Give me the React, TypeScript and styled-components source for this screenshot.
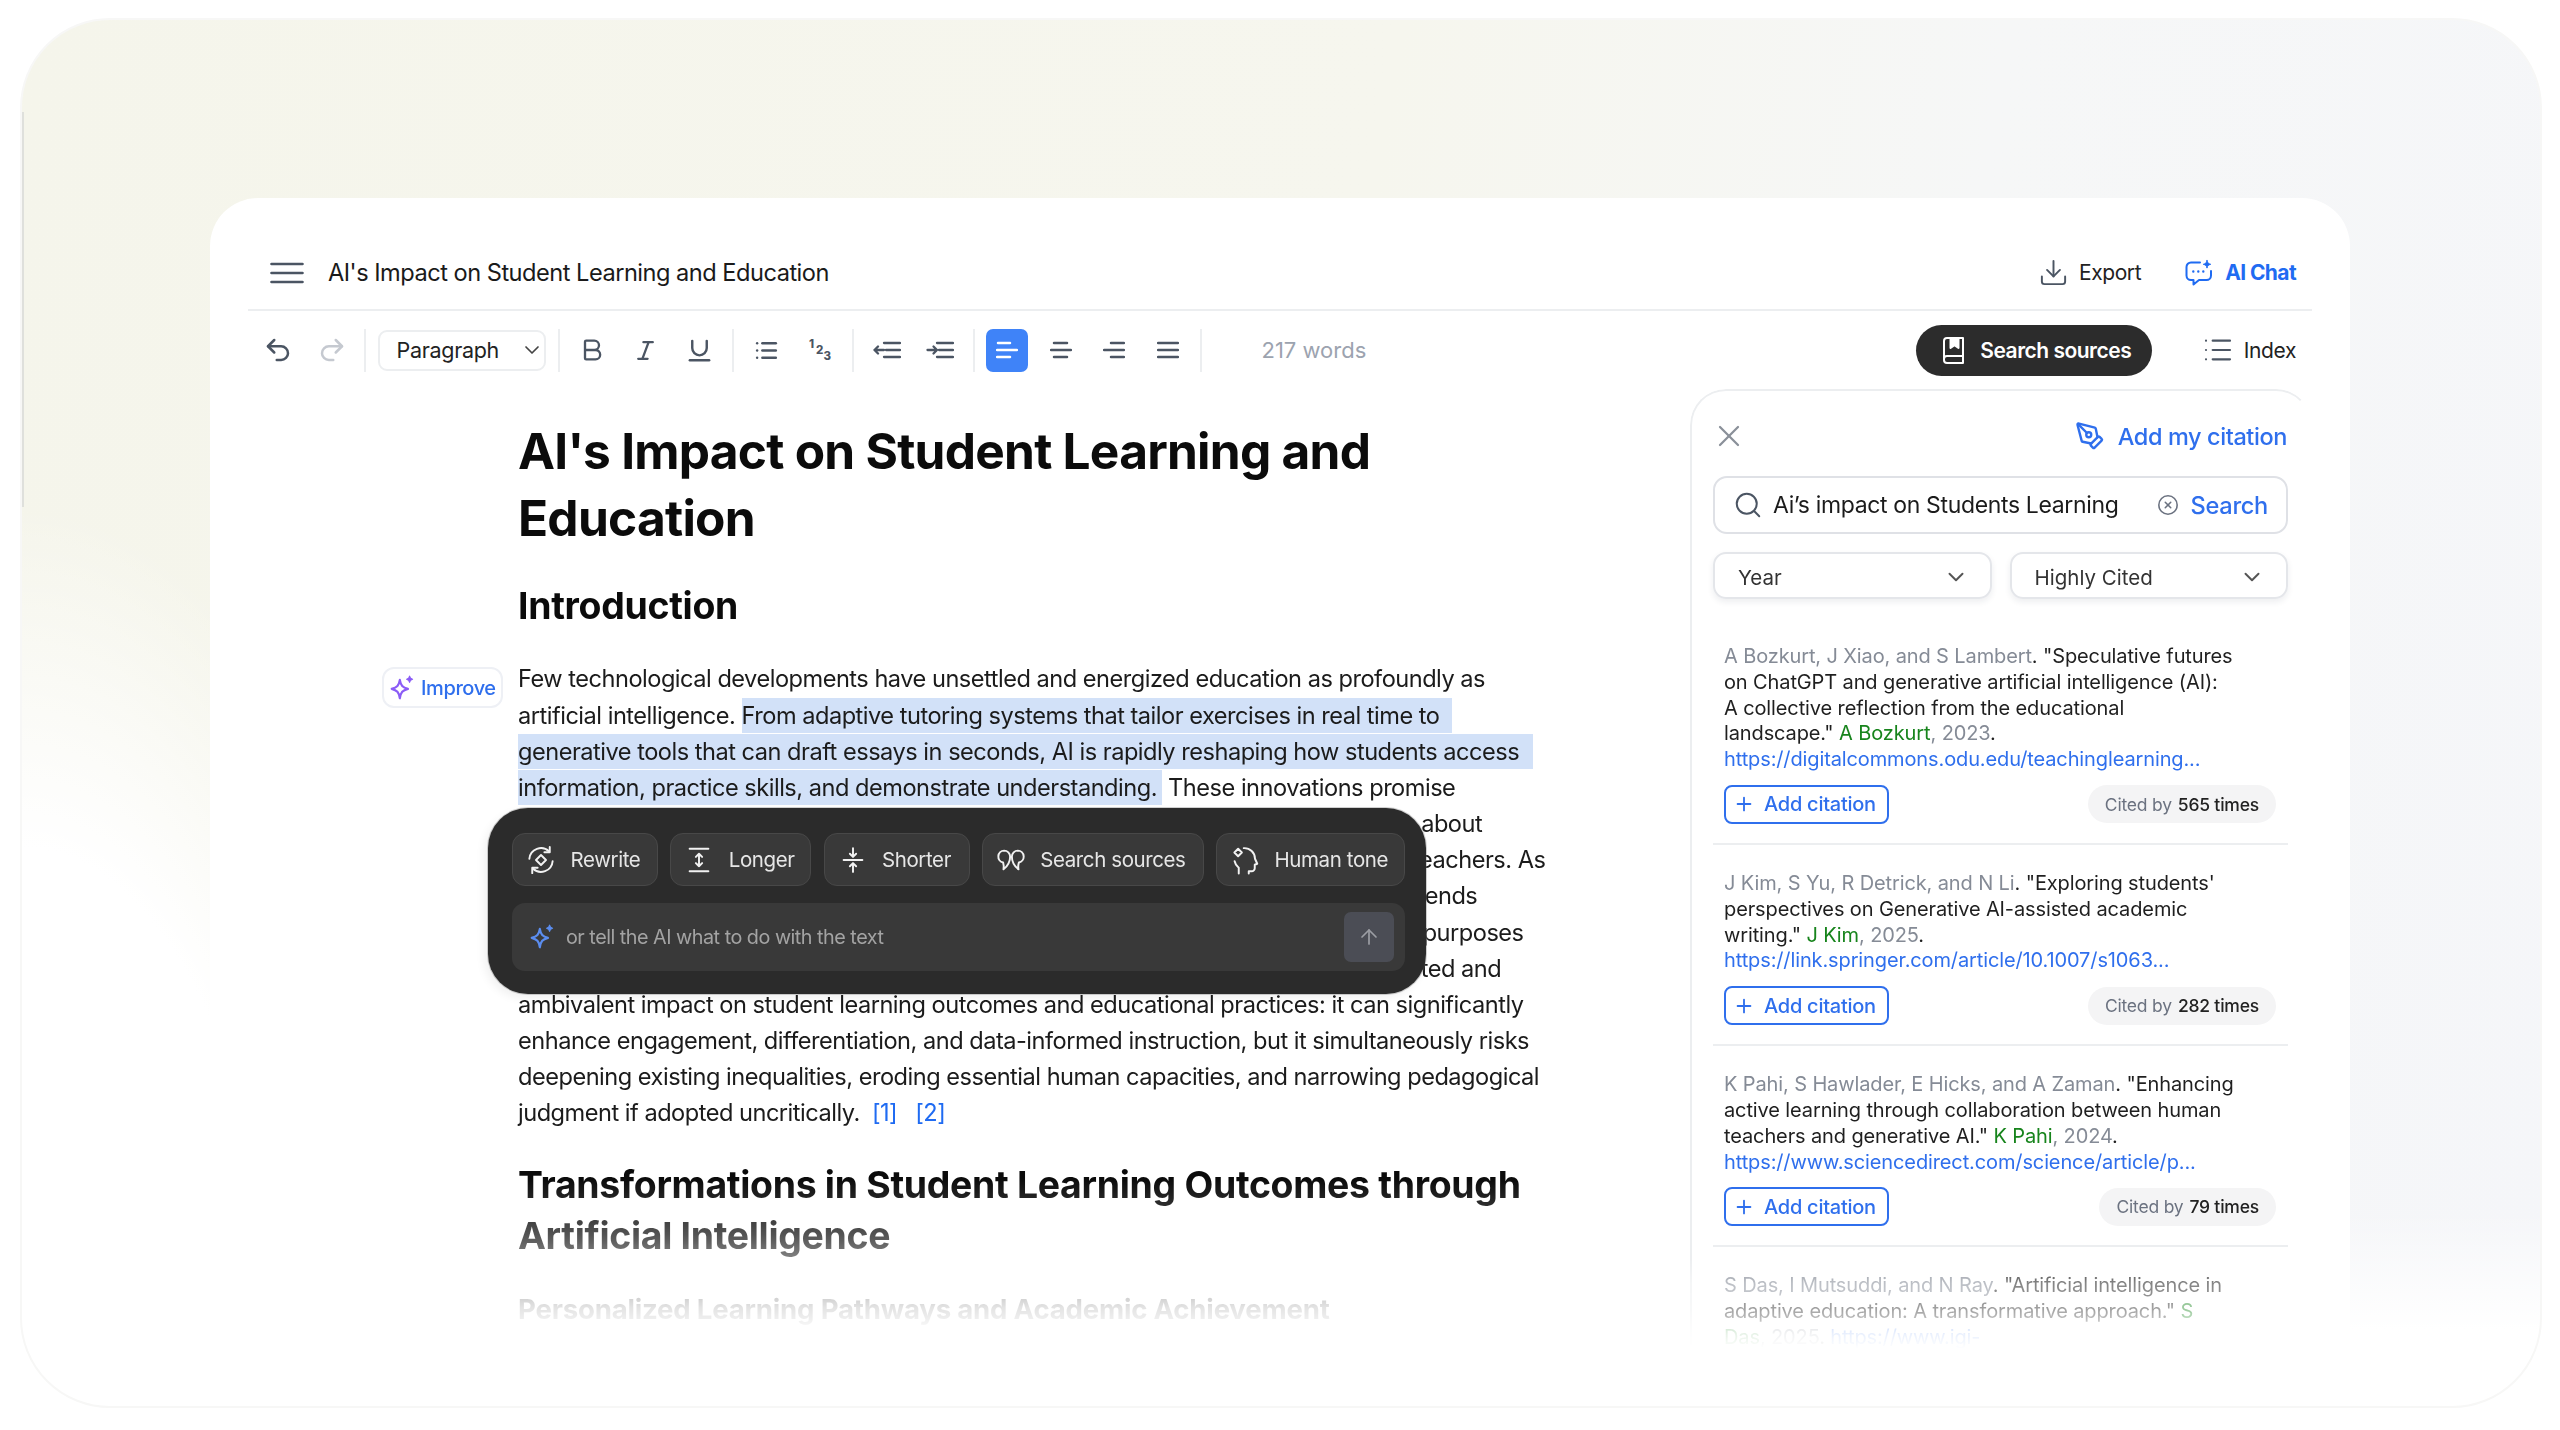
import React from "react";
import styled, { createGlobalStyle } from "styled-components";
import {
  Undo2, Redo2, Bold, Italic, Underline, List, Download, PenTool, X, Search,
  CircleX, ChevronDown, Plus, ArrowUp,
} from "lucide-react";

const Global = createGlobalStyle`
  html, body { margin: 0; padding: 0; background: #fff; }
  body { font-family: Inter, "Noto Sans", sans-serif; color: #111; -webkit-font-smoothing: antialiased; }
  * { box-sizing: border-box; }
`;

const Page = styled.div`
  width: 2560px;
  height: 1430px;
  padding: 18px 20px 22px;
  overflow: hidden;
`;

const Frame = styled.div`
  position: relative;
  width: 2522px;
  height: 1390px;
  padding: 178px 0 0 188px;
  border-radius: 90px;
  border: 2px solid #f7f7f6;
  overflow: hidden;
  background:
    radial-gradient(ellipse 420px 900px at 0 100%, #fff 62%, transparent 100%),
    linear-gradient(to bottom, transparent 86%, #fff 94.5%),
    linear-gradient(100deg, #f5f5eb 0%, #f6f6ee 50%, #f6f7f7 72%, #f5f6f9 100%);
  &::before {
    content: "";
    position: absolute;
    left: 0;
    top: 92px;
    width: 2px;
    height: 395px;
    background: #dfe0dc;
  }
`;

const Card = styled.div`
  width: 2140px;
  height: 1212px;
  padding: 0 38px;
  background: #fff;
  border-radius: 48px 48px 0 0;
`;

const Header = styled.header`
  display: flex;
  align-items: center;
  height: 113px;
  padding: 38px 16px 0 22px;
  border-bottom: 2px solid #eceef0;
`;

const Title = styled.h3`
  margin: 0 0 0 24px;
  font-size: 23.6px;
  font-weight: 400;
  letter-spacing: -0.5px;
  color: #1a1a1a;
`;

const HeaderActions = styled.div`
  display: flex;
  align-items: center;
  margin-left: auto;
`;

const HeaderLink = styled.a<{ $accent?: boolean }>`
  display: flex;
  align-items: center;
  gap: ${(p) => (p.$accent ? "12px" : "10px")};
  margin-left: ${(p) => (p.$accent ? "44px" : "0")};
  font-size: 21px;
  letter-spacing: ${(p) => (p.$accent ? "-0.6px" : "-0.4px")};
  font-weight: ${(p) => (p.$accent ? 700 : 400)};
  color: ${(p) => (p.$accent ? "#1f6bf2" : "#222")};
`;

const Toolbar = styled.div`
  display: flex;
  align-items: center;
  gap: 11.5px;
  height: 78px;
  padding: 0 16px 0 9px;
`;

const ToolButton = styled.div<{ $active?: boolean; $muted?: boolean }>`
  display: flex;
  flex: none;
  align-items: center;
  justify-content: center;
  width: 42px;
  height: 43px;
  border-radius: 7px;
  color: ${(p) => (p.$active ? "#fff" : p.$muted ? "#c5c9d0" : "#4b5563")};
  background: ${(p) => (p.$active ? "#3f83f8" : "transparent")};
`;

const Sep = styled.div`
  flex: none;
  width: 2px;
  height: 43px;
  background: #eceef0;
`;

const BlockSelect = styled.div`
  display: flex;
  flex: none;
  align-items: center;
  justify-content: space-between;
  width: 168.5px;
  height: 41px;
  padding: 0 0 0 17px;
  border: 2px solid #eceef0;
  border-radius: 9px;
  font-size: 21.5px;
  letter-spacing: -0.3px;
  color: #222;
`;

const Words = styled.span`
  margin-left: 48px;
  font-size: 22px;
  color: #9ca3af;
`;

const PillButton = styled.div`
  display: flex;
  align-items: center;
  gap: 15px;
  width: 236px;
  height: 51px;
  margin-left: auto;
  padding-left: 26px;
  border-radius: 26px;
  background: #2c2c2c;
  color: #fff;
  font-size: 21px;
  letter-spacing: -0.5px;
  font-weight: 600;
`;

const IndexLink = styled.div`
  display: flex;
  align-items: center;
  gap: 10px;
  margin-left: 38px;
  font-size: 21px;
  letter-spacing: -0.4px;
  color: #222;
`;

const Main = styled.main`
  display: flex;
  height: 1015px;
`;

const Doc = styled.article`
  flex: 1;
  padding: 28.5px 0 0 270px;
  -webkit-mask-image: linear-gradient(to bottom, #000 790px, rgba(0,0,0,.7) 846px, rgba(0,0,0,.12) 918px, transparent 945px);
  mask-image: linear-gradient(to bottom, #000 790px, rgba(0,0,0,.7) 846px, rgba(0,0,0,.12) 918px, transparent 945px);
`;

const H1 = styled.h1`
  margin: 0;
  font-size: 49.6px;
  line-height: 67px;
  font-weight: 700;
  letter-spacing: -0.75px;
  color: #0b0b0b;
`;

const H2 = styled.h2`
  margin: 0;
  font-size: 37.4px;
  line-height: 50.4px;
  font-weight: 700;
  letter-spacing: -0.3px;
  color: #0b0b0b;
`;

const IntroHeading = styled(H2)`
  margin-top: 29.5px;
`;

const SectionHeading = styled(H2)`
  margin-top: 29px;
`;

const H3 = styled.h3`
  margin: 28px 0 0;
  font-size: 27.6px;
  line-height: 40px;
  font-weight: 700;
  letter-spacing: -0.2px;
  color: #111;
`;

const Paragraph = styled.div`
  position: relative;
  margin-top: 30px;
  font-size: 23.6px;
  letter-spacing: -0.5px;
  line-height: 36.17px;
  color: #1b1b1b;
`;

const Line = styled.div`
  height: 36.17px;
  white-space: nowrap;
`;

const Mark = styled.span<{ $tail?: number }>`
  display: inline-block;
  height: 35.5px;
  padding-right: ${(p) => p.$tail ?? 0}px;
  background: #d2e1f8;
  vertical-align: top;
`;

const Ref = styled.a`
  margin-left: 6px;
  color: #1f6bf2;
  & + & { margin-left: 18px; }
`;

const Improve = styled.div`
  position: absolute;
  left: -136px;
  top: 6px;
  display: flex;
  align-items: center;
  gap: 6px;
  width: 121px;
  height: 41px;
  padding-left: 5px;
  border: 2px solid #eef0f5;
  border-radius: 12px;
  background: #fff;
  font-size: 20px;
  letter-spacing: -0.4px;
  font-weight: 500;
  color: #2f6fed;
`;

const Popup = styled.div`
  position: absolute;
  left: -30px;
  top: 147px;
  display: flex;
  flex-direction: column;
  gap: 17px;
  width: 938px;
  height: 186px;
  padding: 25px 21px 23px 24px;
  border-radius: 40px;
  background: #2b2b2b;
  box-shadow: 0 0 0 1px rgba(120,120,120,.35), -4px 4px 10px rgba(0,0,0,.06);
`;

const ActionRow = styled.div`
  display: flex;
  justify-content: space-between;
`;

const ActionButton = styled.div<{ $w: number }>`
  display: flex;
  align-items: center;
  gap: 14.5px;
  width: ${(p) => p.$w}px;
  height: 53px;
  padding-left: 13px;
  border: 1.5px solid #484848;
  border-radius: 13px;
  background: #393939;
  color: #e6e6e6;
  font-size: 20.5px;
  letter-spacing: -0.4px;
  line-height: 1;
`;

const Prompt = styled.div`
  display: flex;
  align-items: center;
  gap: 11px;
  height: 68px;
  padding: 0 11px 0 17px;
  border-radius: 13px;
  background: #393939;
  color: #a3a3a3;
  font-size: 19.8px;
`;

const SendButton = styled.div`
  display: flex;
  align-items: center;
  justify-content: center;
  width: 50px;
  height: 50px;
  margin-left: auto;
  border-radius: 7px;
  background: #4b4d55;
  color: #9c9ea4;
`;

const Panel = styled.aside`
  flex: none;
  width: 622px;
  padding: 22px 22px 0 21px;
  border: 2px solid #eceef0;
  border-right-color: transparent;
  border-bottom: none;
  border-radius: 36px 36px 0 0;
  -webkit-mask-image: linear-gradient(to bottom, #000 870px, rgba(0,0,0,.55) 894px, rgba(0,0,0,.42) 920px, rgba(0,0,0,.1) 945px, transparent 960px);
  mask-image: linear-gradient(to bottom, #000 870px, rgba(0,0,0,.55) 894px, rgba(0,0,0,.42) 920px, rgba(0,0,0,.1) 945px, transparent 960px);
`;

const PanelTop = styled.div`
  display: flex;
  align-items: center;
  justify-content: space-between;
  height: 46px;
  padding-right: 1px;
`;

const CloseIcon = styled.span`
  display: flex;
  margin-left: -2px;
  color: #8a9099;
`;

const AddMine = styled.div`
  display: flex;
  align-items: center;
  gap: 13px;
  font-size: 23.5px;
  letter-spacing: -0.4px;
  font-weight: 500;
  color: #2f6fed;
`;

const SearchBox = styled.div`
  display: flex;
  align-items: center;
  height: 58px;
  margin-top: 17px;
  padding: 0 18px 0 18px;
  border: 2px solid #dfe1e6;
  border-radius: 14px;
  color: #4b5563;
`;

const SearchText = styled.span`
  margin-left: 10px;
  font-size: 23px;
  letter-spacing: -0.35px;
  color: #1b1b1b;
`;

const ClearIcon = styled.span`
  display: flex;
  margin-left: auto;
  color: #6b7280;
`;

const SearchLink = styled.span`
  margin-left: 12px;
  font-size: 23.6px;
  letter-spacing: -0.3px;
  font-weight: 500;
  color: #2f6fed;
`;

const Filters = styled.div`
  display: flex;
  gap: 18px;
  margin-top: 18px;
`;

const Filter = styled.div`
  display: flex;
  flex: 1;
  align-items: center;
  justify-content: space-between;
  height: 47px;
  padding: 3px 21px 0 23px;
  border: 2px solid #e4e6ea;
  border-radius: 13px;
  box-shadow: 0 3px 6px rgba(30, 40, 60, .08);
  font-size: 20.5px;
  color: #333;
`;

const Entries = styled.div`
  margin-top: 19px;
`;

const Entry = styled.div`
  padding: 26px 0 19px;
  border-bottom: 2px solid #eceef0;
  &:last-child { border-bottom: none; }
`;

const Citation = styled.p`
  margin: 0;
  padding-left: 11px;
  font-size: 20px;
  letter-spacing: -0.12px;
  line-height: 25.8px;
  color: #1f1f1f;
  white-space: nowrap;
`;

const Muted = styled.span`
  color: #858b96;
`;

const Author = styled.span`
  color: #17841c;
`;

const Url = styled.a`
  color: #2f6fed;
`;

const EntryFoot = styled.div`
  display: flex;
  align-items: center;
  justify-content: space-between;
  margin-top: 12px;
  padding: 0 12px 0 11px;
`;

const AddButton = styled.div`
  display: flex;
  align-items: center;
  gap: 9px;
  width: 165px;
  height: 39px;
  padding-left: 7px;
  border: 2px solid #2f6fed;
  border-radius: 8px;
  font-size: 20px;
  letter-spacing: -0.25px;
  font-weight: 500;
  color: #2f6fed;
`;

const CitedBy = styled.div`
  display: flex;
  align-items: center;
  gap: 6px;
  height: 38px;
  padding: 0 17px;
  border-radius: 19px;
  background: #f4f4f5;
  font-size: 17.5px;
  letter-spacing: -0.2px;
  color: #6b7280;
`;

const CitedCount = styled.b`
  font-weight: 500;
  color: #222;
`;

/* ---- drawn icons ---- */

const Hamburger = () => (
  <svg width="34" height="22" viewBox="0 0 34 22" fill="none" stroke="#4b5563" strokeWidth="2.6" strokeLinecap="round">
    <path d="M1.500 2h31M1.500 11h31M1.500 20h31" />
  </svg>
);

const Numbered = () => (
  <svg width="24" height="24" viewBox="0 0 24 24" fill="#4b5563" fontFamily="Inter, sans-serif" fontWeight="800" fontSize="11.5">
    <text x="1" y="10">1</text>
    <text x="8" y="16">2</text>
    <text x="15.500" y="22">3</text>
  </svg>
);

const IndentIcon = ({ dir }: { dir: "in" | "out" }) => (
  <svg width="28" height="18" viewBox="0 0 28 18" fill="none" stroke="#4b5563" strokeWidth="2.3" strokeLinecap="round" strokeLinejoin="round">
    <path d="M11 2h16M13 9h14M11 16h16" />
    {dir === "out" ? <path d="M11 9H1.500M5 5.500 1.500 9 5 12.500" /> : <path d="M1.500 9H11M7.500 5.500 11 9l-3.500 3.500" />}
  </svg>
);

const alignSpans: Record<string, [number, number][]> = {
  left: [[2, 14], [1, 21], [1, 14]],
  center: [[4, 17], [1, 21], [4, 17]],
  right: [[8, 21], [1, 21], [8, 21]],
  justify: [[1, 21], [1, 21], [1, 21]],
};

const AlignIcon = ({ kind }: { kind: string }) => (
  <svg width="22" height="18" viewBox="0 0 22 18" fill="none" stroke="currentColor" strokeWidth="2.500" strokeLinecap="round">
    {alignSpans[kind].map(([a, b], i) => (
      <path key={i} d={`M${a} ${2 + i * 7}H${b}`} />
    ))}
  </svg>
);

const ChatSpark = () => (
  <svg width="28" height="27" viewBox="0 0 28 27" fill="none" stroke="#1f6bf2" strokeWidth="2" strokeLinecap="round" strokeLinejoin="round">
    <path d="M15 3.500H6a4.500 4.500 0 0 0-4.500 4.500v8.500A4.500 4.500 0 0 0 6 21h2.500v4.500l5.500-4.500h7.500a4.500 4.500 0 0 0 4.500-4.500V12" />
    <path d="M8.300 12.500h.01M13.300 12.500h.01M18.300 12.500h.01" strokeWidth="2.400" />
    <path d="M22 1.500c.4 2.400 1.200 3.200 3.700 3.800-2.500.6-3.300 1.400-3.700 3.800-.4-2.400-1.200-3.200-3.700-3.800 2.500-.6 3.300-1.400 3.700-3.800z" fill="#1f6bf2" strokeWidth="1" />
  </svg>
);

const BookIcon = () => (
  <svg width="23" height="27" viewBox="0 0 23 27" fill="none" stroke="#fff" strokeWidth="2" strokeLinecap="round" strokeLinejoin="round">
    <path d="M2 22V4a3 3 0 0 1 3-3h16v25H5a3 3 0 0 1-3-3v-1a3 3 0 0 1 3-3h16" />
    <path d="M8.500 1v10l4-2.800 4 2.800V1" fill="#fff" />
  </svg>
);

const Sparkle = ({ color, size }: { color: string; size: number }) => (
  <svg width={size} height={size} viewBox="0 0 24 24" fill="none" stroke={color} strokeWidth="2" strokeLinejoin="round">
    <path d="M10 4.500c.9 5.200 2.500 7 7.500 8.300-5 1.300-6.600 3.100-7.500 8.700-.9-5.600-2.500-7.400-7.500-8.700 5-1.300 6.600-3.100 7.500-8.300z" />
    <path d="M19 1c.3 1.900.9 2.500 2.800 2.900-1.900.4-2.500 1-2.800 2.900-.3-1.900-.9-2.500-2.800-2.900 1.900-.4 2.500-1 2.800-2.900z" fill={color} strokeWidth="1" />
  </svg>
);

const ActionIcon: React.FC<{ children: React.ReactNode }> = ({ children }) => (
  <svg width="30" height="30" viewBox="0 0 24 24" fill="none" stroke="#f2f2f2" strokeWidth="1.550" strokeLinecap="round" strokeLinejoin="round">
    {children}
  </svg>
);

const RewriteIcon = () => (
  <ActionIcon>
    <path d="M2.700 11a9.300 9.300 0 0 1 15.800-5.800" />
    <path d="M19 1.500v4.300h-4.300" />
    <path d="M21.300 13a9.300 9.300 0 0 1-15.800 5.800" />
    <path d="M5 22.500v-4.300h4.300" />
    <path d="M12 8l4 4-4 4-4-4z" />
  </ActionIcon>
);

const LongerIcon = () => (
  <ActionIcon>
    <path d="M4.500 3h15M4.500 21h15M12 7v10M9.500 9.500 12 7l2.500 2.500M9.500 14.500 12 17l2.500-2.500" />
  </ActionIcon>
);

const ShorterIcon = () => (
  <ActionIcon>
    <path d="M4.500 12h15M12 2.500v7M9.500 7l2.500 2.500L14.500 7M12 21.500v-7M9.500 17l2.500-2.500 2.500 2.500" />
  </ActionIcon>
);

const QuotesIcon = () => (
  <ActionIcon>
    <path d="M6.500 4.500a4.800 4.800 0 0 0-.8 9.500c.5 1.700.8 3.300.3 5.500 3-2.500 5.300-6 5.300-10.200a4.800 4.800 0 0 0-4.800-4.800z" />
    <path d="M17.500 4.500a4.800 4.800 0 0 1 .8 9.500c-.5 1.700-.8 3.300-.3 5.500-3-2.500-5.300-6-5.300-10.200a4.800 4.800 0 0 1 4.800-4.800z" />
  </ActionIcon>
);

const HumanIcon = () => (
  <ActionIcon>
    <path d="M11 2.500a8.500 8.500 0 0 1 9 8.500l1.800 4-2 .8v2.700a2.500 2.500 0 0 1-2.500 2.500h-2.300v1.800" />
    <path d="M7 22.800v-4.600c-1.700-1.300-2.900-3-3.300-5.200" />
    <path d="M6.500 3l3 3-3 3-3-3z" />
  </ActionIcon>
);

const entries = [
  {
    who: "A Bozkurt, J Xiao, and S Lambert",
    lines: ['"Speculative futures', "on ChatGPT and generative artificial intelligence (AI):", "A collective reflection from the educational", 'landscape."'],
    author: "A Bozkurt",
    year: "2023",
    url: "https://digitalcommons.odu.edu/teachinglearning...",
    cited: "565",
  },
  {
    who: "J Kim, S Yu, R Detrick, and N Li",
    lines: [`"Exploring students'`, "perspectives on Generative AI-assisted academic", 'writing."'],
    author: "J Kim",
    year: "2025",
    url: "https://link.springer.com/article/10.1007/s1063...",
    cited: "282",
  },
  {
    who: "K Pahi, S Hawlader, E Hicks, and A Zaman",
    lines: ['"Enhancing', "active learning through collaboration between human", 'teachers and generative AI."'],
    author: "K Pahi",
    year: "2024",
    url: "https://www.sciencedirect.com/science/article/p...",
    cited: "79",
  },
];

export default function App() {
  return (
    <Page>
      <Global />
      <Frame>
        <Card>
          <Header>
            <Hamburger />
            <Title>AI's Impact on Student Learning and Education</Title>
            <HeaderActions>
              <HeaderLink>
                <Download size={31} strokeWidth={1.5} color="#4b5563" />
                Export
              </HeaderLink>
              <HeaderLink $accent>
                <ChatSpark />
                AI Chat
              </HeaderLink>
            </HeaderActions>
          </Header>

          <Toolbar>
            <ToolButton><Undo2 size={30} strokeWidth={2} /></ToolButton>
            <ToolButton $muted><Redo2 size={30} strokeWidth={2} /></ToolButton>
            <Sep />
            <BlockSelect>Paragraph<ChevronDown size={24} strokeWidth={1.7} color="#444" /></BlockSelect>
            <Sep />
            <ToolButton><Bold size={28} strokeWidth={2} /></ToolButton>
            <ToolButton><Italic size={25} strokeWidth={2.2} /></ToolButton>
            <ToolButton><Underline size={29} strokeWidth={2} /></ToolButton>
            <Sep />
            <ToolButton><List size={25} strokeWidth={2.3} /></ToolButton>
            <ToolButton><Numbered /></ToolButton>
            <Sep />
            <ToolButton><IndentIcon dir="out" /></ToolButton>
            <ToolButton><IndentIcon dir="in" /></ToolButton>
            <Sep />
            <ToolButton $active><AlignIcon kind="left" /></ToolButton>
            <ToolButton><AlignIcon kind="center" /></ToolButton>
            <ToolButton><AlignIcon kind="right" /></ToolButton>
            <ToolButton><AlignIcon kind="justify" /></ToolButton>
            <Sep />
            <Words>217 words</Words>
            <PillButton><BookIcon />Search sources</PillButton>
            <IndexLink><List size={32} strokeWidth={1.6} color="#4b5563" />Index</IndexLink>
          </Toolbar>

          <Main>
            <Doc>
              <H1>AI's Impact on Student Learning and<br />Education</H1>
              <IntroHeading>Introduction</IntroHeading>
              <Paragraph>
                <Improve><Sparkle color="#8b5cf6" size={26} />Improve</Improve>
                <Line>Few technological developments have unsettled and energized education as profoundly as</Line>
                <Line>artificial intelligence. <Mark $tail={13}>From adaptive tutoring systems that tailor exercises in real time to</Mark></Line>
                <Line><Mark $tail={14}>generative tools that can draft essays in seconds, AI is rapidly reshaping how students access</Mark></Line>
                <Line><Mark $tail={5}>information, practice skills, and demonstrate understanding.</Mark> These innovations promise</Line>
                <Line>more personalized and efficient instruction, yet they also raise urgent new questions about</Line>
                <Line>integrity, equity, and the changing roles of both learners and their dedicated human teachers. As</Line>
                <Line>adoption accelerates, research on what generative models truly offer and where that ends</Line>
                <Line>remains uneven, and so many institutions struggle to align these tools with their core purposes</Line>
                <Line>of schooling. Taken together, the evidence suggests that AI has a complex, multifaceted and</Line>
                <Line>ambivalent impact on student learning outcomes and educational practices: it can significantly</Line>
                <Line>enhance engagement, differentiation, and data-informed instruction, but it simultaneously risks</Line>
                <Line>deepening existing inequalities, eroding essential human capacities, and narrowing pedagogical</Line>
                <Line>judgment if adopted uncritically. <Ref>[1]</Ref><Ref>[2]</Ref></Line>

                <Popup>
                  <ActionRow>
                    <ActionButton $w={146}><RewriteIcon />Rewrite</ActionButton>
                    <ActionButton $w={141}><LongerIcon />Longer</ActionButton>
                    <ActionButton $w={146}><ShorterIcon />Shorter</ActionButton>
                    <ActionButton $w={222}><QuotesIcon />Search sources</ActionButton>
                    <ActionButton $w={189}><HumanIcon />Human tone</ActionButton>
                  </ActionRow>
                  <Prompt>
                    <Sparkle color="#5b8def" size={26} />
                    or tell the AI what to do with the text
                    <SendButton><ArrowUp size={24} strokeWidth={1.7} /></SendButton>
                  </Prompt>
                </Popup>
              </Paragraph>
              <SectionHeading>Transformations in Student Learning Outcomes through<br />Artificial Intelligence</SectionHeading>
              <H3>Personalized Learning Pathways and Academic Achievement</H3>
            </Doc>

            <Panel>
              <PanelTop>
                <CloseIcon><X size={36} strokeWidth={1.5} /></CloseIcon>
                <AddMine><PenTool size={30} strokeWidth={1.9} />Add my citation</AddMine>
              </PanelTop>
              <SearchBox>
                <Search size={30} strokeWidth={1.6} />
                <SearchText>Ai’s impact on Students Learning</SearchText>
                <ClearIcon><CircleX size={22} strokeWidth={1.7} /></ClearIcon>
                <SearchLink>Search</SearchLink>
              </SearchBox>
              <Filters>
                <Filter>Year<ChevronDown size={26} strokeWidth={1.8} color="#555" /></Filter>
                <Filter>Highly Cited<ChevronDown size={26} strokeWidth={1.8} color="#555" /></Filter>
              </Filters>
              <Entries>
                {entries.map((e) => (
                  <Entry key={e.who}>
                    <Citation>
                      <Muted>{e.who}</Muted>. {e.lines[0]}
                      {e.lines.slice(1).map((l, i) => (
                        <React.Fragment key={i}><br />{l}</React.Fragment>
                      ))}{" "}
                      <Author>{e.author}</Author><Muted>, {e.year}</Muted>.
                      <br />
                      <Url>{e.url}</Url>
                    </Citation>
                    <EntryFoot>
                      <AddButton><Plus size={22} strokeWidth={2} />Add citation</AddButton>
                      <CitedBy>Cited by <CitedCount>{e.cited} times</CitedCount></CitedBy>
                    </EntryFoot>
                  </Entry>
                ))}
                <Entry>
                  <Citation>
                    <Muted>S Das, I Mutsuddi, and N Ray</Muted>. "Artificial intelligence in
                    <br />
                    adaptive education: A transformative approach." <Author>S</Author>
                    <br />
                    <Author>Das</Author><Muted>, 2025</Muted>. <Url>https://www.igi-</Url>
                  </Citation>
                </Entry>
              </Entries>
            </Panel>
          </Main>
        </Card>
      </Frame>
    </Page>
  );
}
